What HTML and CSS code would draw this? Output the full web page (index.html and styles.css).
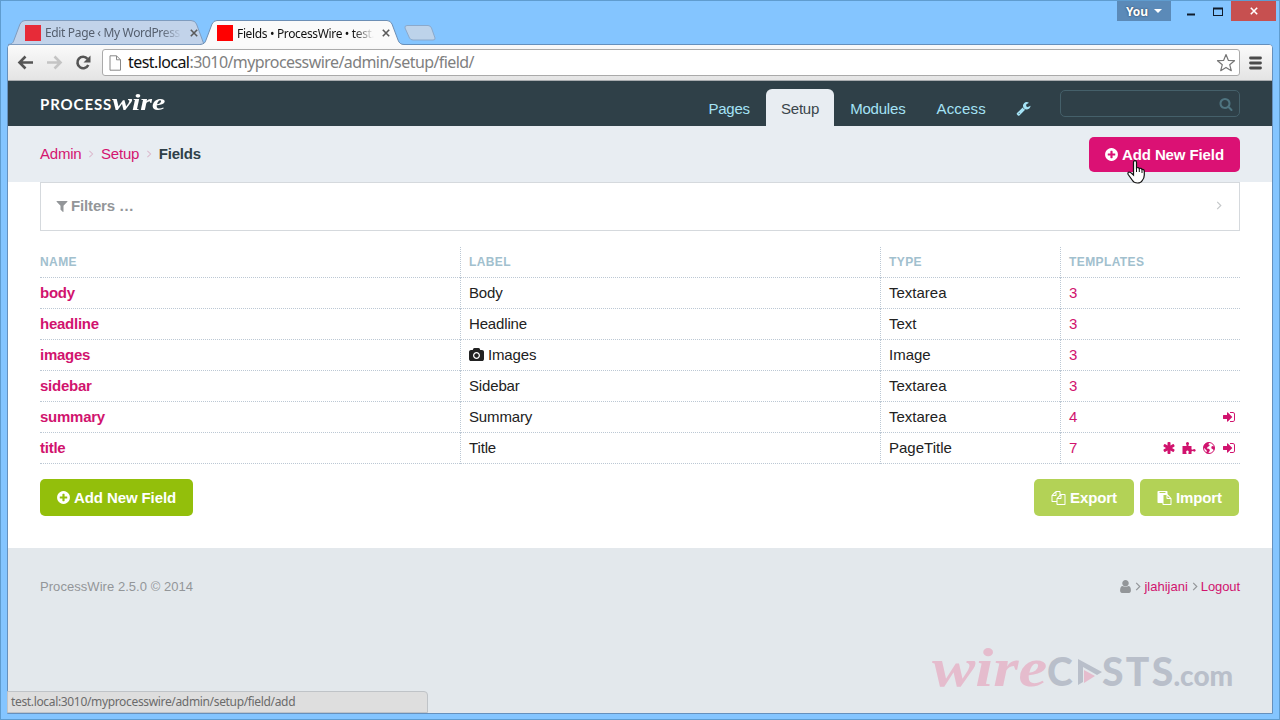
FILE: index.html
```html
<!DOCTYPE html>
<html lang="en">
<head>
  <meta charset="UTF-8">
  <title>Fields • ProcessWire • test.local</title>
  <link rel="stylesheet" href="styles.css">
</head>
<body>

  <!-- shared icons -->
  <svg class="sprite">
    <symbol id="plus" viewBox="0 0 1792 1792"><path d="M1344 960v-128q0-26-19-45t-45-19h-256v-256q0-26-19-45t-45-19h-128q-26 0-45 19t-19 45v256h-256q-26 0-45 19t-19 45v128q0 26 19 45t45 19h256v256q0 26 19 45t45 19h128q26 0 45-19t19-45v-256h256q26 0 45-19t19-45zm320-64q0 209-103 385.5t-279.5 279.5-385.5 103-385.5-103-279.5-279.5-103-385.5 103-385.5 279.5-279.5 385.5-103 385.5 103 279.5 279.5 103 385.5z"/></symbol>
    <symbol id="signin" viewBox="0 0 1792 1792"><path d="M1312 896q0 26-19 45l-544 544q-19 19-45 19t-45-19-19-45v-288h-448q-26 0-45-19t-19-45v-384q0-26 19-45t45-19h448v-288q0-26 19-45t45-19 45 19l544 544q19 19 19 45zm352-352v704q0 119-84.5 203.5t-203.5 84.5h-320q-13 0-22.5-9.5t-9.5-22.5q0-4-1-20t-.5-26.5 3-23.5 10-19.5 20.5-6.5h320q66 0 113-47t47-113v-704q0-66-47-113t-113-47h-312l-11.5-1-11.5-3-8-5.5-7-9-2-13.5q0-4-1-20t-.5-26.5 3-23.5 10-19.5 20.5-6.5h320q119 0 203.5 84.5t84.5 203.5z"/></symbol>
    <symbol id="angle" viewBox="0 0 6 10"><path d="M1 1l4 4-4 4" fill="none" stroke="currentColor" stroke-width="1.3"/></symbol>
    <symbol id="close" viewBox="0 0 8 8"><path d="M.8.8l6.4 6.4M7.2.8L.8 7.2" fill="none" stroke="currentColor" stroke-width="1.6"/></symbol>
  </svg>

  <div class="window">
    <div class="titlebar">
      <div class="tabs">
        <div class="tab tab-back">
          <svg class="tab-shape" viewBox="0 0 200 25"><path d="M0 24.5C4 24 5 23 6 20L12 4Q13.500 .5 17 .5H183Q187 .5 188.500 4L196 24.500z" fill="#c2d3ea" stroke="#7f9cbf"/></svg>
          <span class="favicon"></span>
          <span class="tab-title">Edit Page ‹ My WordPress</span>
          <svg class="tab-close"><use href="#close"/></svg>
        </div>
        <div class="tab tab-active">
          <svg class="tab-shape" viewBox="0 0 208 26"><path d="M0 24.500C4 24 5 23 6 20L12 4Q13.500 .5 17 .5H187Q190.500 .5 192 4L198 20Q199.500 24.500 204 24.500V26H0z" fill="#fafafa"/><path d="M0 24.500C4 24 5 23 6 20L12 4Q13.500 .5 17 .5H187Q190.500 .5 192 4L198 20Q199.500 24.500 204 24.500" fill="none" stroke="#6d8fb5"/></svg>
          <span class="favicon"></span>
          <span class="tab-title">Fields • ProcessWire • test.</span>
          <svg class="tab-close"><use href="#close"/></svg>
        </div>
        <svg class="new-tab" viewBox="0 0 32 16"><path d="M3 .5H24Q26.500 .5 27.500 3L31 13Q31.500 15 29 15H9Q6.500 15 5.500 13L1 3Q.5 .5 3 .5z" fill="#bdd3ea" stroke="#8ba9cb"/></svg>
      </div>
      <div class="controls">
        <div class="you">You <i class="caret"></i></div>
        <svg class="win-btns" viewBox="0 0 60 20"><path d="M16 13.500h8" stroke="#111c2b" stroke-width="2"/><rect x="42.500" y="7.500" width="9" height="7" fill="none" stroke="#111c2b"/><path d="M42 7.500h10" stroke="#111c2b" stroke-width="2"/></svg>
        <div class="win-close"><svg><use href="#close"/></svg></div>
      </div>
    </div>

    <div class="browser">
      <div class="toolbar">
        <svg class="nav" viewBox="0 0 90 34" stroke-width="2.600">
          <path d="M25 16.500H12M17.500 10.500l-6 6 6 6" stroke="#555"/>
          <path d="M39 16.500h13M46.500 10.500l6 6-6 6" stroke="#c4c4c4"/>
          <path d="M80.300 19A5.700 5.700 0 1 1 79.500 12.800" stroke="#555"/><path d="M82.500 9.500v7h-7z" fill="#555"/>
        </svg>
        <div class="urlbar">
          <svg class="page-icon" viewBox="0 0 12 16"><path d="M1 .8h6.500l4 4v10.400H1zM7.500 .8v4h4" fill="#fff" stroke="#888"/></svg>
          <span class="url"><b>test.local</b>:3010/myprocesswire/admin/setup/field/</span>
          <svg class="star" viewBox="0 0 20 20"><path d="M10 1.500l2.300 5.800 6.200.4-4.800 4 1.600 6-5.300-3.300-5.300 3.300 1.600-6-4.800-4 6.200-.4z" fill="#fff" stroke="#777" stroke-width="1.200" stroke-linejoin="round"/></svg>
        </div>
        <svg class="menu" viewBox="0 0 13 14"><path d="M1.500 2h10M1.500 7h10M1.500 12h10" stroke="#4a4a4a" stroke-width="2.800" stroke-linecap="round"/></svg>
      </div>

      <div class="masthead">
        <div class="logo"><span>PROCESS</span><em>wire</em></div>
        <div class="topnav">
          <a>Pages</a>
          <a class="on">Setup</a>
          <a>Modules</a>
          <a class="access">Access</a>
          <a class="tools"><svg class="wrench" viewBox="0 0 1792 1792"><path d="M448 1472q0-26-19-45t-45-19-45 19-19 45 19 45 45 19 45-19 19-45zm644-420l-682 682q-37 37-90 37-52 0-91-37l-106-108q-38-36-38-90 0-53 38-91l681-681q39 98 114.500 173.500t173.500 114.500zm634-435q0 39-23 106-47 134-164.500 217.500t-258.500 83.500q-185 0-316.500-131.500t-131.500-316.500 131.500-316.500 316.500-131.500q58 0 121.500 16.500t107.500 46.500q16 11 16 28t-16 28l-293 169v224l193 107q5-3 79-48.500t135.500-81 70.500-35.500q15 0 23.500 10t8.500 25z"/></svg></a>
        </div>
        <div class="search"><svg viewBox="0 0 1792 1792"><path d="M1216 832q0-185-131.500-316.500t-316.500-131.500-316.500 131.500-131.500 316.500 131.500 316.500 316.500 131.500 316.500-131.500 131.500-316.500zm512 832q0 52-38 90t-90 38q-54 0-90-38l-343-342q-179 124-399 124-143 0-273.500-55.500t-225-150-150-225-55.500-273.500 55.500-273.500 150-225 225-150 273.500-55.500 273.500 55.500 225 150 150 225 55.500 273.500q0 220-124 399l343 343q37 37 37 90z"/></svg></div>
      </div>

      <div class="headline">
        <div class="crumbs">
          <a>Admin</a><svg class="angle"><use href="#angle"/></svg><a>Setup</a><svg class="angle"><use href="#angle"/></svg><strong>Fields</strong>
        </div>
        <a class="btn btn-pink"><svg class="icon"><use href="#plus"/></svg>Add New Field</a>
      </div>

      <div class="content">
        <div class="filters">
          <svg class="icon" viewBox="0 0 1792 1792"><path d="M1595 295q17 41-14 70l-493 493v742q0 42-39 59-13 5-25 5-27 0-45-19l-256-256q-19-19-19-45v-486l-493-493q-31-29-14-70 17-39 59-39h1280q42 0 59 39z"/></svg>
          <span>Filters …</span>
          <svg class="angle"><use href="#angle"/></svg>
        </div>

        <table>
          <thead>
            <tr><th class="c-name">Name</th><th class="c-label">Label</th><th class="c-type">Type</th><th>Templates</th></tr>
          </thead>
          <tbody>
            <tr><td>body</td><td>Body</td><td>Textarea</td><td>3</td></tr>
            <tr><td>headline</td><td>Headline</td><td>Text</td><td>3</td></tr>
            <tr><td>images</td><td><svg class="camera" viewBox="-64 0 1920 1792"><path d="M896 672q119 0 203.500 84.500t84.500 203.500-84.500 203.500-203.500 84.500-203.500-84.500-84.500-203.500 84.500-203.500 203.500-84.500zm704-416q106 0 181 75t75 181v896q0 106-75 181t-181 75h-1408q-106 0-181-75t-75-181v-896q0-106 75-181t181-75h224l51-136q19-49 69.500-84.500t103.500-35.500h512q53 0 103.500 35.500t69.500 84.500l51 136h224zm-704 1152q185 0 316.500-131.500t131.500-316.500-131.500-316.500-316.500-131.500-316.500 131.500-131.500 316.500 131.500 316.500 316.500 131.500z"/></svg>Images</td><td>Image</td><td>3</td></tr>
            <tr><td>sidebar</td><td>Sidebar</td><td>Textarea</td><td>3</td></tr>
            <tr><td>summary</td><td>Summary</td><td>Textarea</td><td><div class="count">4<span class="flags"><svg><use href="#signin"/></svg></span></div></td></tr>
            <tr><td>title</td><td>Title</td><td>PageTitle</td><td><div class="count">7<span class="flags">
              <svg viewBox="0 0 1792 1792"><path d="M1546 1050q46 26 59.500 77.500t-12.500 97.500l-64 110q-26 46-77.500 59.500t-97.500-12.500l-266-153v307q0 52-38 90t-90 38h-128q-52 0-90-38t-38-90v-307l-266 153q-46 26-97.500 12.500t-77.500-59.500l-64-110q-26-46-12.500-97.500t59.500-77.500l266-154-266-154q-46-26-59.500-77.500t12.500-97.500l64-110q26-46 77.500-59.500t97.500 12.500l266 153v-307q0-52 38-90t90-38h128q52 0 90 38t38 90v307l266-153q46-26 97.500-12.500t77.500 59.500l64 110q26 46 12.500 97.500t-59.500 77.500l-266 154z"/></svg>
              <svg viewBox="0 0 14 14"><path d="M.5 5H4.300Q5 4.600 4.200 3.200A1.500 1.500 0 1 1 6.800 3.200Q6 4.600 6.700 5H9.500V8.300Q10 9 11.500 8.300A1.300 1.300 0 1 1 11.500 10.300Q10 9.800 9.500 10.500V13H6.700Q6 12.600 6.600 11.500A1.300 1.300 0 1 0 4.300 11.500Q4.900 12.600 4.300 13H.5z"/></svg>
              <svg viewBox="0 0 14 14"><circle cx="7" cy="7" r="5.500" fill="none" stroke="currentColor"/><path d="M7.500 1.200L6.300 3.200 7.800 4 7 5.300 5.600 6.100 4.800 7.400 6.800 7.800 8 9 7.300 10.500 6 12.600 3.800 12 5 10 3.600 8.600 1.600 6.500 2 4 4 2zM9.500 5.600L11.300 4.700 12.500 7 12 9.300 10.800 8.200 9.300 7.300z"/></svg>
              <svg><use href="#signin"/></svg></span></div></td></tr>
          </tbody>
        </table>

        <div class="actions">
          <a class="btn btn-green"><svg class="icon"><use href="#plus"/></svg>Add New Field</a>
          <div class="right">
            <a class="btn btn-light"><svg class="icon" viewBox="0 0 1792 1792"><path d="M1696 384q40 0 68 28t28 68v1216q0 40-28 68t-68 28h-960q-40 0-68-28t-28-68v-288h-544q-40 0-68-28t-28-68v-672q0-40 20-88t48-76l408-408q28-28 76-48t88-20h416q40 0 68 28t28 68v328q68-40 128-40h416zm-544 213l-299 299h299v-299zm-640-384l-299 299h299v-299zm196 647l316-316v-416h-384v416q0 40-28 68t-68 28h-416v640h512v-256q0-40 20-88t48-76zm956 804v-1152h-384v416q0 40-28 68t-68 28h-416v640h896z"/></svg>Export</a>
            <a class="btn btn-light"><svg class="icon" viewBox="0 0 1792 1792"><path d="M768 1664h896v-640h-416q-40 0-68-28t-28-68v-416h-384v1152zm256-1440v-64q0-13-9.500-22.500t-22.500-9.500h-704q-13 0-22.500 9.500t-9.500 22.500v64q0 13 9.500 22.500t22.500 9.500h704q13 0 22.500-9.500t9.500-22.500zm256 672h299l-299-299v299zm512 128v672q0 40-28 68t-68 28h-960q-40 0-68-28t-28-68v-160h-544q-40 0-68-28t-28-68v-1344q0-40 28-68t68-28h1088q40 0 68 28t28 68v328q21 13 36 28l408 408q28 28 48 76t20 88z"/></svg>Import</a>
          </div>
        </div>
      </div>

      <div class="footer">
        <span class="version">ProcessWire 2.5.0 © 2014</span>
        <div class="account">
          <svg class="user" viewBox="256 128 1280 1536"><path d="M1536 1399q0 109-62.500 187t-150.500 78h-854q-88 0-150.500-78t-62.500-187q0-85 8.500-160.500t31.500-152 58.500-131 94-89 134.500-34.500q131 128 313 128t313-128q76 0 134.500 34.500t94 89 58.500 131 31.500 152 8.500 160.500zm-256-887q0 159-112.500 271.500t-271.500 112.500-271.500-112.500-112.500-271.500 112.500-271.500 271.500-112.500 271.500 112.500 112.500 271.500z"/></svg>
          <svg class="angle"><use href="#angle"/></svg><a>jlahijani</a><svg class="angle"><use href="#angle"/></svg><a>Logout</a>
        </div>
      </div>
    </div>
  </div>

  <div class="watermark">
    <em>wire</em><span class="casts">C</span><svg viewBox="0 0 24 28"><path d="M0 1L24 14 19 17 5 9V24L0 27z" fill="#b9bfca"/><path d="M6 12L17 18 6 25z" fill="#e5bccd"/></svg><span class="casts">STS</span><span class="com">.com</span>
  </div>
  <div class="status">test.local:3010/myprocesswire/admin/setup/field/add</div>
  <svg class="cursor" viewBox="0 0 18 24"><path d="M6.500 13V2.500Q6.500 .7 8 .7T9.500 2.500V8Q11.500 6.800 12.300 8.600 14.200 7.600 15 9.500 17.300 9 17.300 11.500V15Q17.300 18 15.300 20.500 14 23 10.500 23 7 23 5.500 20.500L1.200 14.500Q.3 12.500 2 12 3.500 12 6.500 15z" fill="#fff" stroke="#111" stroke-width="1.200"/><path d="M9.500 8v4M12.300 8.600V12M15 9.500V13" stroke="#111"/></svg>

</body>
</html>
```
FILE: styles.css
```css
* {
  box-sizing: border-box;
}

body {
  margin: 0;
  width: 1280px;
  height: 720px;
  overflow: hidden;
  position: relative;
  font-family: "Liberation Sans", Arial, sans-serif;
  font-size: 15px;
  color: #222;
  background: #84c5ff;
}

svg {
  fill: currentColor;
  flex: none;
}

.sprite {
  display: none;
}

.window {
  height: 720px;
  border: 1px solid #5f9ccf;
  padding: 0 6px 5px 6px;
  display: flex;
  flex-direction: column;
}

/* browser frame */
.titlebar {
  height: 43px;
  display: flex;
  justify-content: space-between;
  font-family: "Noto Sans", sans-serif;
}

.tabs {
  display: flex;
  align-items: flex-end;
  padding-left: 4px;
}

.tab {
  position: relative;
  height: 25px;
  display: flex;
  align-items: center;
  font-size: 12px;
}

.tab-back {
  width: 190px;
  height: 24px;
  padding: 1px 0 0 14px;
  color: #56606f;
  z-index: 0;
}

.tab-active {
  width: 205px;
  padding: 1px 0 0 17px;
  color: #111;
  height: 25px;
  margin: 0 0 -1px -1px;
  z-index: 1;
}

.tab-shape {
  position: absolute;
  left: 0;
  top: 0;
  width: 208px;
  height: 26px;
  z-index: -1;
}

.tab-back .tab-shape {
  left: -3px;
  width: 200px;
  height: 25px;
}

.favicon {
  width: 16px;
  height: 16px;
  flex: none;
  background: #f00;
  margin-right: 4px;
}

.tab-back .favicon {
  background: #e72b38;
}

.tab-title {
  width: 137px;
  flex: none;
  margin-right: 8px;
  white-space: nowrap;
  overflow: hidden;
  letter-spacing: -0.35px;
  -webkit-mask-image: linear-gradient(to right, #000 85%, transparent);
}

.tab-close {
  width: 8px;
  height: 8px;
  color: #5a5a5a;
}

.new-tab {
  width: 32px;
  height: 16px;
  margin: 0 0 3px -1px;
}

.controls {
  display: flex;
  align-items: flex-start;
  margin-right: -3px;
}

.you {
  width: 54px;
  height: 20px;
  background: #5b8ab8;
  color: #fff;
  font-size: 12px;
  font-weight: bold;
  display: flex;
  align-items: center;
  justify-content: center;
  gap: 6px;
  text-shadow: 0 0 2px #234;
}

.caret {
  border: 4px solid transparent;
  border-top-color: #fff;
  border-bottom: 0;
}

.win-btns {
  width: 60px;
  height: 20px;
}

.win-close {
  width: 45px;
  height: 20px;
  background: #c75050;
  color: #fff;
  display: flex;
  align-items: center;
  justify-content: center;
}

.win-close svg {
  width: 8px;
  height: 8px;
}

.browser {
  flex: 1;
  display: flex;
  flex-direction: column;
  border: 1px solid #6590bd;
  border-radius: 4px 4px 0 0;
  background: #fff;
  overflow: hidden;
}

.toolbar {
  height: 36px;
  flex: none;
  display: flex;
  align-items: center;
  background: linear-gradient(#fafafa, #e4e4e4);
  border-bottom: 1px solid #a9adb0;
}

.nav {
  width: 90px;
  height: 34px;
  fill: none;
}

.urlbar {
  width: 1138px;
  height: 27px;
  margin-left: 4px;
  border: 1px solid #aaa;
  border-radius: 3px;
  background: #fff;
  display: flex;
  align-items: center;
  padding: 0 3px 0 6px;
}

.page-icon {
  width: 12px;
  height: 16px;
}

.url {
  flex: 1;
  margin-left: 7px;
  padding-bottom: 1px;
  font: 16px "Noto Sans", sans-serif;
  letter-spacing: -0.57px;
  color: #808080;
}

.url b {
  font-weight: normal;
  color: #111;
}

.star {
  width: 20px;
  height: 20px;
}

.menu {
  width: 13px;
  height: 14px;
  margin-left: 9px;
}

/* admin header */
.masthead {
  height: 45px;
  flex: none;
  display: flex;
  background: #2f4048;
  padding: 0 32px;
}

.logo {
  flex: 1;
  color: #fff;
  display: flex;
  align-items: baseline;
  padding-top: 8px;
  height: 34px;
}

.logo span {
  font: bold 15px Lato, sans-serif;
  letter-spacing: 0.9px;
}

.logo em {
  font: italic bold 24px/26px "Liberation Serif", serif;
  transform: scaleX(1.25);
  transform-origin: left;
}

.topnav {
  display: flex;
  align-items: flex-end;
  color: #a5e3f6;
  letter-spacing: -0.2px;
}

.topnav a {
  height: 37px;
  padding: 0 15px;
  margin-left: 1px;
  line-height: 39px;
  border-radius: 6px 6px 0 0;
}

.topnav .on {
  background: #e8edf2;
  color: #3a454b;
}

.topnav .access {
  letter-spacing: 0.2px;
}

.topnav .tools {
  padding-left: 14px;
}

.wrench {
  width: 15px;
  height: 15px;
  vertical-align: -2px;
}

.search {
  width: 180px;
  height: 27px;
  margin: 9px 0 0 14px;
  border: 1px solid #45606a;
  border-radius: 5px;
  display: flex;
  align-items: center;
  justify-content: flex-end;
  padding-right: 6px;
  color: #4f7480;
}

.search svg {
  width: 14px;
  height: 14px;
}

.headline {
  height: 56px;
  flex: none;
  display: flex;
  justify-content: space-between;
  align-items: center;
  background: #e8edf2;
  padding: 0 32px;
}

.crumbs {
  display: flex;
  align-items: center;
  padding-bottom: 2px;
  letter-spacing: -0.2px;
  color: #d4146f;
}

.crumbs strong {
  color: #2f4048;
}

.angle {
  width: 6px;
  height: 10px;
}

.crumbs .angle {
  height: 8px;
  margin: 2px 7px 0 6.5px;
  color: #dcb9cd;
}

.btn {
  height: 37px;
  border-radius: 5px;
  color: #fff;
  font-weight: bold;
  letter-spacing: -0.1px;
  display: flex;
  align-items: center;
  padding: 0 16px;
}

.btn-pink {
  height: 35px;
  padding: 0 16px 0 15px;
  background: #db1174;
}

.btn-green {
  background: #93bf0b;
  padding-right: 17px;
}

.btn-light {
  background: #b3d256;
  padding: 0 17px;
}

.icon {
  width: 15px;
  height: 15px;
  margin-right: 3px;
}

.btn-light .icon {
  width: 15px;
  height: 14px;
  margin-right: 4px;
}

/* fields list */
.content {
  height: 366px;
  flex: none;
  padding: 0 32px;
}

.filters {
  height: 49px;
  border: 1px solid #d5d9dd;
  display: flex;
  align-items: center;
  padding: 0 17px 2px 14px;
  color: #939699;
  font-weight: bold;
  letter-spacing: -0.15px;
}

.filters .icon {
  width: 14px;
  height: 14px;
  margin-right: 2px;
}

.filters span {
  flex: 1;
}

.filters .angle {
  height: 9px;
  color: #c5c8ca;
}

table {
  width: 1200px;
  margin-top: 16px;
  table-layout: fixed;
  border-collapse: separate;
  border-spacing: 0;
}

th, td {
  height: 31px;
  padding: 0 0 2px 8px;
  text-align: left;
  letter-spacing: -0.15px;
  border-bottom: 1px dotted #bcc8d4;
  border-left: 1px dotted #bcc8d4;
}

th:first-child, td:first-child {
  padding-left: 0;
  border-left: 0;
}

th {
  padding-bottom: 0;
  font-size: 12px;
  letter-spacing: 0.4px;
  text-transform: uppercase;
  color: #a1c0ce;
}

.c-name, .c-label {
  width: 420px;
}

.c-type {
  width: 180px;
}

td:first-child {
  font-weight: bold;
  letter-spacing: -0.25px;
}

td:nth-child(3) {
  letter-spacing: 0;
}

td:first-child, td:last-child {
  color: #d1136e;
}

.camera {
  width: 15px;
  height: 14px;
  margin-right: 4px;
  vertical-align: -2px;
}

.count, .flags {
  display: flex;
  align-items: center;
  justify-content: space-between;
}

.flags {
  gap: 6px;
  padding: 2px 4px 0 0;
}

.flags svg {
  width: 14px;
  height: 14px;
}

.actions {
  display: flex;
  justify-content: space-between;
  margin-top: 15px;
}

.right {
  display: flex;
  gap: 6px;
  padding-right: 1px;
}

.footer {
  flex: 1;
  background: #e3e8ec;
  color: #939699;
  font-size: 13px;
  display: flex;
  justify-content: space-between;
  align-items: flex-start;
  padding: 31px 32px 0;
}

.version {
  letter-spacing: 0.05px;
}

.account {
  display: flex;
  align-items: center;
}

.account a {
  color: #d1136e;
}

.account a:last-child {
  letter-spacing: -0.1px;
}

.account .angle {
  margin: 0 3px 0 4px;
  height: 9px;
}

.user {
  width: 11px;
  height: 13px;
}

/* overlays */
.watermark {
  position: absolute;
  left: 932px;
  top: 641px;
  display: flex;
  align-items: baseline;
  color: #b9bfca;
}

.watermark em {
  width: 115px;
  font: italic bold 54px/54px "Liberation Serif", serif;
  color: #e5bccd;
  transform: scaleX(1.2);
  transform-origin: left;
}

.watermark svg {
  width: 24px;
  height: 28px;
  margin: 0 0 0 3px;
}

.casts {
  font: 900 39px Lato, sans-serif;
  letter-spacing: 2.3px;
}

.com {
  font: 900 28px Lato, sans-serif;
  margin-left: -2px;
}

.status {
  position: absolute;
  left: 7px;
  top: 691px;
  width: 421px;
  height: 22px;
  background: #dedede;
  border: 1px solid #bfc3c7;
  border-radius: 0 4px 0 0;
  padding-left: 3px;
  font: 12px/20px "Noto Sans", sans-serif;
  letter-spacing: -0.34px;
  color: #6b6b6b;
}

.cursor {
  position: absolute;
  left: 1127px;
  top: 160px;
  width: 18px;
  height: 24px;
}
```
